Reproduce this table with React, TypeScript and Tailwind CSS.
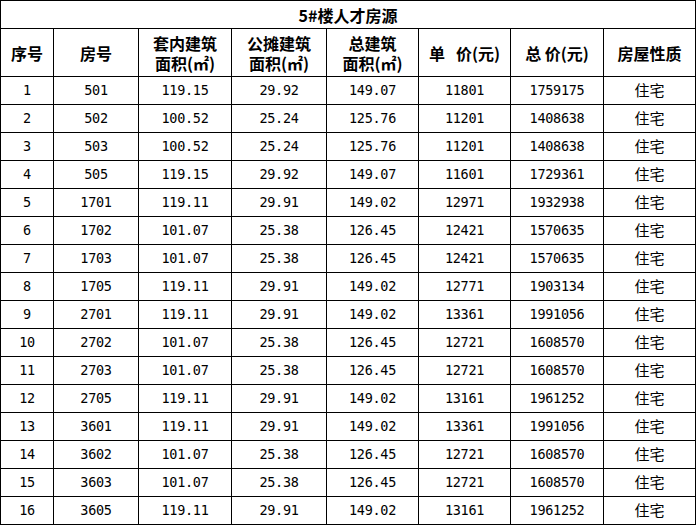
const widths = ["w-[53px]", "w-[85px]", "w-[93px]", "w-[95px]", "w-[92px]", "w-[92px]", "w-[93px]", "w-[92px]"]

const rows: string[][] = [
  ["1", "501", "119.15", "29.92", "149.07", "11801", "1759175"],
  ["2", "502", "100.52", "25.24", "125.76", "11201", "1408638"],
  ["3", "503", "100.52", "25.24", "125.76", "11201", "1408638"],
  ["4", "505", "119.15", "29.92", "149.07", "11601", "1729361"],
  ["5", "1701", "119.11", "29.91", "149.02", "12971", "1932938"],
  ["6", "1702", "101.07", "25.38", "126.45", "12421", "1570635"],
  ["7", "1703", "101.07", "25.38", "126.45", "12421", "1570635"],
  ["8", "1705", "119.11", "29.91", "149.02", "12771", "1903134"],
  ["9", "2701", "119.11", "29.91", "149.02", "13361", "1991056"],
  ["10", "2702", "101.07", "25.38", "126.45", "12721", "1608570"],
  ["11", "2703", "101.07", "25.38", "126.45", "12721", "1608570"],
  ["12", "2705", "119.11", "29.91", "149.02", "13161", "1961252"],
  ["13", "3601", "119.11", "29.91", "149.02", "13361", "1991056"],
  ["14", "3602", "101.07", "25.38", "126.45", "12721", "1608570"],
  ["15", "3603", "101.07", "25.38", "126.45", "12721", "1608570"],
  ["16", "3605", "119.11", "29.91", "149.02", "13161", "1961252"],
]

const headers: string[][] = [
  ["序号"],
  ["房号"],
  ["套内建筑", "面积(㎡)"],
  ["公摊建筑", "面积(㎡)"],
  ["总建筑", "面积(㎡)"],
  ["单   价(元)"],
  ["总 价(元)"],
  ["房屋性质"],
]

const cjk = "font-['Noto_Sans_CJK_SC',sans-serif]"
const mono = "font-['DejaVu_Sans_Mono','Noto_Sans_CJK_SC',monospace]"

export default function App() {
  return (
    <div className="bg-white w-[697px] h-[525px] text-black">
      <div className="w-[696px] border-l border-t border-black">
        <div className="flex">
          <div className={`w-[695px] h-[28px] border-r border-b border-black flex items-center justify-center text-[16px] font-bold ${cjk}`}>
            5#楼人才房源
          </div>
        </div>
        <div className="flex">
          {headers.map((lines, i) => (
            <div
              key={i}
              className={`${widths[i]} h-[48px] border-r border-b border-black flex flex-col items-center justify-center text-[16px] leading-[20px] font-bold whitespace-pre ${cjk}`}
            >
              {lines.map((l) => (
                <span key={l}>{l}</span>
              ))}
            </div>
          ))}
        </div>
        {rows.map((r) => (
          <div key={r[0]} className="flex">
            {[...r, "住宅"].map((v, i) => (
              <div
                key={i}
                className={`${widths[i]} h-[28px] border-r border-b border-black flex items-center justify-center ${
                  i === 7 ? `text-[15px] font-normal ${cjk}` : `text-[13.5px] tracking-[-0.3px] ${mono}`
                }`}
              >
                {v}
              </div>
            ))}
          </div>
        ))}
      </div>
    </div>
  )
}
